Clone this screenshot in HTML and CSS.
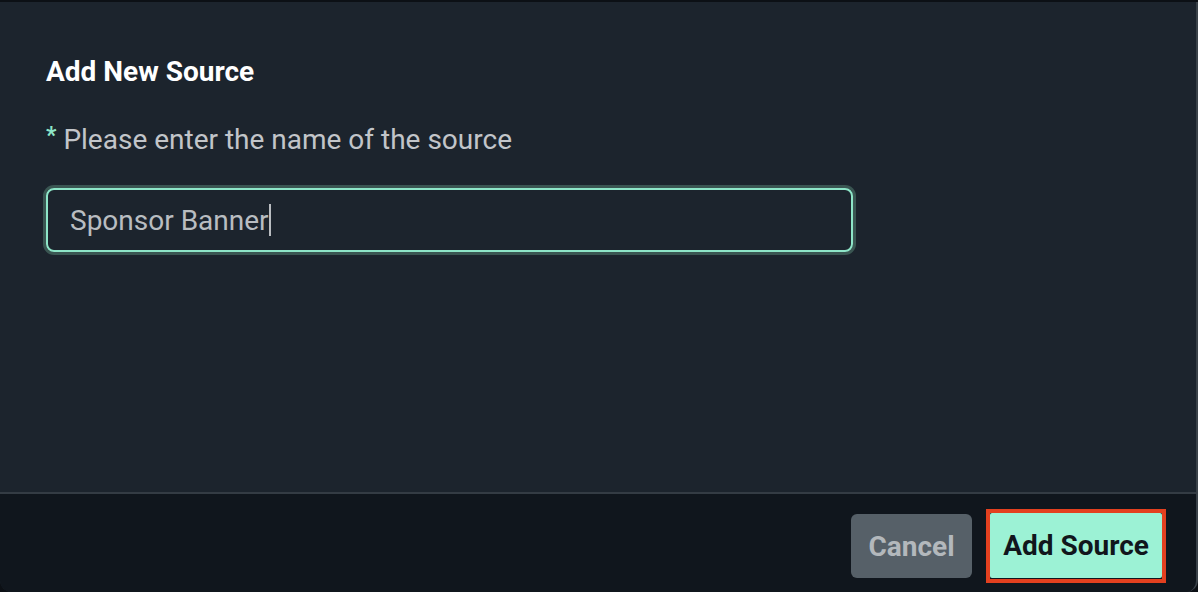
FILE: index.html
```html
<!DOCTYPE html>
<html lang="en">
<head>
<meta charset="utf-8">
<title>Add New Source</title>
<link rel="stylesheet" href="styles.css">
</head>
<body>
<div class="modal">
  <div class="content">
    <h2 class="title">Add New Source</h2>
    <label class="label" for="src"><span class="req">*</span> Please enter the name of the source</label>
    <div class="field"><span class="value">Sponsor Banner</span><span class="caret"></span></div>
  </div>
  <div class="footer">
    <button class="btn btn-cancel" type="button">Cancel</button>
    <div class="highlight"><button class="btn btn-primary" type="button">Add Source</button></div>
  </div>
</div>
</body>
</html>
```

FILE: styles.css
```css
html, body {
  margin: 0;
  padding: 0;
  background: #0c1015;
  width: 1198px;
  height: 592px;
  overflow: hidden;
}
body {
  font-family: Roboto, "Liberation Sans", sans-serif;
}
.modal {
  margin-top: 2px;
  height: 590px;
  box-sizing: border-box;
  display: flex;
  flex-direction: column;
  background: #1c242d;
  border-right: 2px solid #3a4249;
  border-radius: 0 0 12px 12px;
  overflow: hidden;
}
.content {
  flex: 1;
  padding: 0 46px;
}
.title {
  margin: 53px 0 0;
  font-size: 28px;
  line-height: 34px;
  font-weight: 700;
  color: #ffffff;
}
.label {
  display: block;
  margin-top: 30px;
  font-size: 28px;
  line-height: 34px;
  color: #c2c5c9;
}
.req {
  color: #8ee6c8;
  font-size: 23px;
  font-weight: 700;
  vertical-align: 6px;
}
.field {
  margin-top: 31px;
  width: 807px;
  height: 64px;
  box-sizing: border-box;
  border: 2px solid #8ee6c8;
  border-radius: 8px;
  box-shadow: 0 0 0 3px #3a5652;
  display: flex;
  align-items: center;
  padding-left: 22px;
  font-size: 28px;
  color: #b9bdc1;
}
.caret {
  width: 2px;
  height: 32px;
  background: #b9bdc1;
  margin-left: 0;
}
.footer {
  height: 100px;
  box-sizing: border-box;
  border-top: 2px solid #343c44;
  background: #10161d;
  display: flex;
  align-items: center;
  justify-content: flex-end;
  gap: 14px;
  padding-top: 6px;
  padding-right: 30px;
}
.btn {
  font-family: Roboto, "Liberation Sans", sans-serif;
  font-size: 28px;
  font-weight: 700;
  border: none;
  height: 64px;
  padding: 0;
  cursor: pointer;
}
.btn-cancel {
  width: 121px;
  background: #566068;
  color: #b3b8bc;
  border-radius: 6px;
}
.highlight {
  border: 4px solid #e3401f;
  padding: 0 0 1px 0;
  display: flex;
}
.btn-primary {
  width: 172px;
  height: 65px;
  background: #9cf2d5;
  color: #11161c;
  border-radius: 2px;
}
```
